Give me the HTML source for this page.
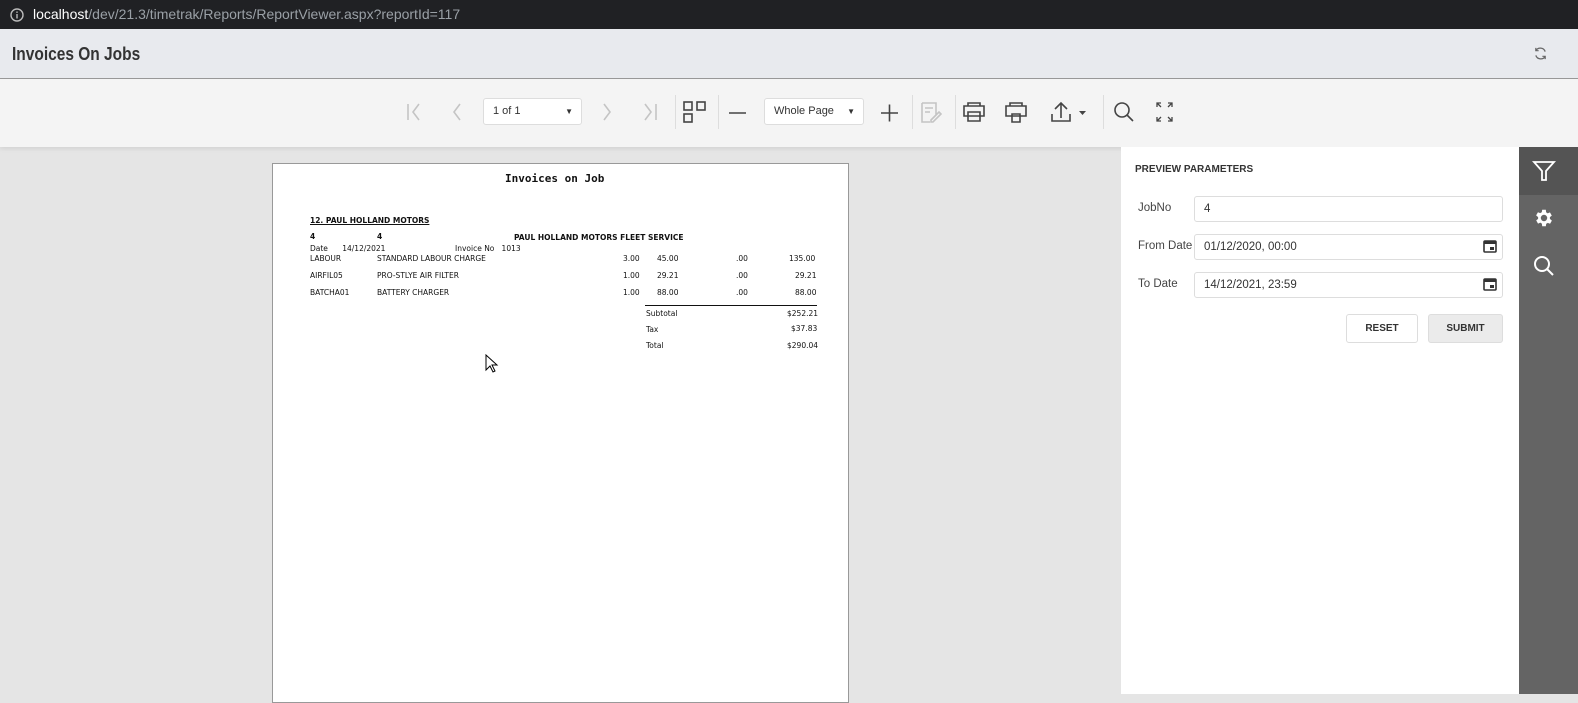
<!DOCTYPE html>
<html><head><style>
*{margin:0;padding:0;box-sizing:border-box}
body{width:1578px;height:694px;overflow:hidden;font-family:"Liberation Sans",sans-serif;background:#e5e5e5;position:relative}
.a{position:absolute}
.addr{left:0;top:0;width:1578px;height:29px;background:#202124;color:#9aa0a6;font-size:14px;line-height:29px;padding-left:33px}
.addr b{color:#fff;font-weight:normal}
.hdr{left:0;top:29px;width:1578px;height:50px;background:#e8eaee;border-bottom:1px solid #9a9a9a}
.tb{left:0;top:79px;width:1578px;height:68px;background:#f4f4f4;box-shadow:0 2px 4px rgba(0,0,0,.08)}
.sel{background:#fff;border:1px solid #ddd;border-radius:3px;height:27px;font-size:11px;line-height:25px;padding-left:9px;color:#333}
.sep{width:1px;height:34px;background:#ddd;top:95px}
.paper{left:272px;top:163px;width:577px;height:540px;background:#fff;border:1px solid #999}
.r{font-family:"DejaVu Sans",sans-serif;font-size:7.5px;color:#111;position:absolute;white-space:nowrap}
.panel{left:1121px;top:147px;width:398px;height:547px;background:#fff}
.side{left:1519px;top:147px;width:59px;height:547px;background:#646464}
.lbl{font-size:11.5px;color:#444;position:absolute}
.inp{position:absolute;left:1194px;width:309px;height:26px;border:1px solid #ddd;border-radius:3px;font-size:11.5px;color:#333;line-height:24px;padding-left:9px}
.btn{position:absolute;top:314px;height:29px;border:1px solid #ddd;border-radius:3px;font-size:10px;font-weight:bold;color:#333;text-align:center;line-height:27px}
svg{position:absolute}
</style></head><body>
<div class="a addr"><b>localhost</b>/dev/21.3/timetrak/Reports/ReportViewer.aspx?reportId=117</div>
<svg style="left:10px;top:8px" width="14" height="14" viewBox="0 0 14 14"><circle cx="7" cy="7" r="6" fill="none" stroke="#bbb" stroke-width="1.4"/><rect x="6.3" y="6" width="1.4" height="4.5" fill="#bbb"/><rect x="6.3" y="3.5" width="1.4" height="1.4" fill="#bbb"/></svg>
<div class="a hdr"><div style="position:absolute;left:12px;top:15px;font-size:18px;font-weight:bold;color:#333;transform:scaleX(.86);transform-origin:left">Invoices On Jobs</div></div>
<svg style="left:1533px;top:46px" width="15" height="15" viewBox="0 0 16 16" fill="none" stroke="#666" stroke-width="1.3"><path d="M13 6A5.5 5.5 0 0 0 3 5M3 2v3h3M3 10a5.5 5.5 0 0 0 10 1M13 14v-3h-3"/></svg>
<div class="a tb"></div>
<svg style="left:400px;top:98px" width="790" height="30" viewBox="0 0 790 30" fill="none" stroke-width="1.6">
<g stroke="#c4c4c4"><path d="M8 6v16M19 6l-6 8 6 8"/><path d="M60 6l-6 8 6 8"/><path d="M204 6l6 8-6 8"/><path d="M245 6l6 8-6 8M256 6v16"/></g>
<g stroke="#444"><rect x="284" y="4" width="8" height="8"/><rect x="297" y="4" width="8" height="8"/><rect x="284" y="16" width="8" height="8"/>
<path d="M329 15h17"/><path d="M481 15h17M489.5 6.5v17"/>
<path d="M568 8v-3h12v3M564 8h20v10h-20zM568 14h12v9h-12z"/>
<path d="M610 8v-3h12v3M606 8h20v10h-20zM612 16h8v8h-8z" />
<path d="M652 16v7h18v-7M661 20V5M655 11l6-6 6 6"/>
<circle cx="722" cy="12" r="7"/><path d="M727 17l6 6"/>
<g stroke-width="1.3"><path d="M757 9V5h4M757 5l4 4M772 9V5h-4M772 5l-4 4M757 19v4h4M757 23l4-4M772 19v4h-4M772 23l-4-4"/></g></g>
<g stroke="#c4c4c4"><path d="M522 5h14v12M522 5v19h8M525 10h8M525 14h5M531 22l8-8 2 2-8 8h-2z"/></g>
<path d="M679 13h7l-3.5 4z" fill="#444"/>
</svg>
<div class="a sel" style="left:483px;top:98px;width:99px">1 of 1<span style="position:absolute;right:8px;font-size:8px">▼</span></div>
<div class="a sel" style="left:764px;top:98px;width:100px">Whole Page<span style="position:absolute;right:8px;font-size:8px">▼</span></div>
<div class="a sep" style="left:675px"></div><div class="a sep" style="left:718px"></div><div class="a sep" style="left:912px"></div><div class="a sep" style="left:955px"></div><div class="a sep" style="left:1103px"></div>
<div class="a paper">
<div class="r" style="left:232px;top:8px;font-size:11px;font-weight:bold;font-family:'DejaVu Sans Mono',monospace">Invoices on Job</div>
<div class="r" style="left:37px;top:52px;font-weight:bold;text-decoration:underline">12. PAUL HOLLAND MOTORS</div>
<div class="r" style="left:37px;top:68px;font-weight:bold">4</div><div class="r" style="left:104px;top:68px;font-weight:bold">4</div>
<div class="r" style="left:241px;top:69px;font-weight:bold">PAUL HOLLAND MOTORS FLEET SERVICE</div>
<div class="r" style="left:37px;top:80px">Date &nbsp;&nbsp;&nbsp;&nbsp; 14/12/2021</div><div class="r" style="left:182px;top:80px">Invoice No &nbsp; 1013</div>
<div class="r" style="left:37px;top:90px">LABOUR</div><div class="r" style="left:104px;top:90px">STANDARD LABOUR CHARGE</div>
<div class="r" style="left:350px;top:90px">3.00</div><div class="r" style="left:384px;top:90px">45.00</div><div class="r" style="left:463px;top:90px">.00</div><div class="r" style="left:516px;top:90px">135.00</div>
<div class="r" style="left:37px;top:107px">AIRFIL05</div><div class="r" style="left:104px;top:107px">PRO-STLYE AIR FILTER</div>
<div class="r" style="left:350px;top:107px">1.00</div><div class="r" style="left:384px;top:107px">29.21</div><div class="r" style="left:463px;top:107px">.00</div><div class="r" style="left:522px;top:107px">29.21</div>
<div class="r" style="left:37px;top:124px">BATCHA01</div><div class="r" style="left:104px;top:124px">BATTERY CHARGER</div>
<div class="r" style="left:350px;top:124px">1.00</div><div class="r" style="left:384px;top:124px">88.00</div><div class="r" style="left:463px;top:124px">.00</div><div class="r" style="left:522px;top:124px">88.00</div>
<div style="position:absolute;left:372px;top:141px;width:172px;height:1px;background:#111"></div>
<div class="r" style="left:373px;top:145px">Subtotal</div><div class="r" style="left:514px;top:145px">$252.21</div>
<div class="r" style="left:373px;top:161px">Tax</div><div class="r" style="left:518px;top:160px">$37.83</div>
<div class="r" style="left:373px;top:177px">Total</div><div class="r" style="left:514px;top:177px">$290.04</div>
</div>
<svg style="left:485px;top:354px" width="14" height="20" viewBox="0 0 14 20"><path d="M1 1v15l4-4 3 6 2-1-3-6h5z" fill="#fff" stroke="#000" stroke-width="1"/></svg>
<div class="a panel"></div>
<div class="a" style="left:1135px;top:164px;font-size:10px;font-weight:bold;color:#333">PREVIEW PARAMETERS</div>
<div class="lbl" style="left:1138px;top:202px">JobNo</div><div class="inp" style="top:196px">4</div>
<div class="lbl" style="left:1138px;top:240px">From Date</div><div class="inp" style="top:234px">01/12/2020, 00:00</div>
<div class="lbl" style="left:1138px;top:278px">To Date</div><div class="inp" style="top:272px">14/12/2021, 23:59</div>
<svg style="left:1483px;top:239px" width="14" height="14" viewBox="0 0 14 14"><rect x="1" y="2" width="12" height="11" rx="1" fill="none" stroke="#333" stroke-width="1.6"/><rect x="1" y="2" width="12" height="3" fill="#333"/><rect x="7" y="8" width="4" height="3" fill="#333"/></svg>
<svg style="left:1483px;top:277px" width="14" height="14" viewBox="0 0 14 14"><rect x="1" y="2" width="12" height="11" rx="1" fill="none" stroke="#333" stroke-width="1.6"/><rect x="1" y="2" width="12" height="3" fill="#333"/><rect x="7" y="8" width="4" height="3" fill="#333"/></svg>
<div class="btn" style="left:1346px;width:72px;background:#fff">RESET</div>
<div class="btn" style="left:1428px;width:75px;background:#ebebeb">SUBMIT</div>
<div class="a side"></div>
<div class="a" style="left:1519px;top:147px;width:59px;height:48px;background:#545454"></div>
<svg style="left:1532px;top:160px" width="24" height="22" viewBox="0 0 24 22" fill="none" stroke="#fff" stroke-width="1.8"><path d="M2 2h20l-8 9v9h-4v-9z"/></svg>
<svg style="left:1533px;top:207px" width="22" height="22" viewBox="0 0 24 24"><path fill="#fff" d="M19.4 13a7.5 7.5 0 0 0 0-2l2.1-1.6-2-3.5-2.5 1a7 7 0 0 0-1.7-1L15 3h-4l-.4 2.7a7 7 0 0 0-1.7 1l-2.5-1-2 3.5L6.6 11a7.5 7.5 0 0 0 0 2l-2.1 1.6 2 3.5 2.5-1a7 7 0 0 0 1.7 1L11 21h4l.4-2.7a7 7 0 0 0 1.7-1l2.5 1 2-3.5zM13 15.5a3.5 3.5 0 1 1 0-7 3.5 3.5 0 0 1 0 7z" transform="translate(-1 0)"/></svg>
<svg style="left:1533px;top:255px" width="22" height="22" viewBox="0 0 22 22" fill="none" stroke="#fff" stroke-width="2"><circle cx="9" cy="9" r="7"/><path d="M14 14l6 6"/></svg>
</body></html>
